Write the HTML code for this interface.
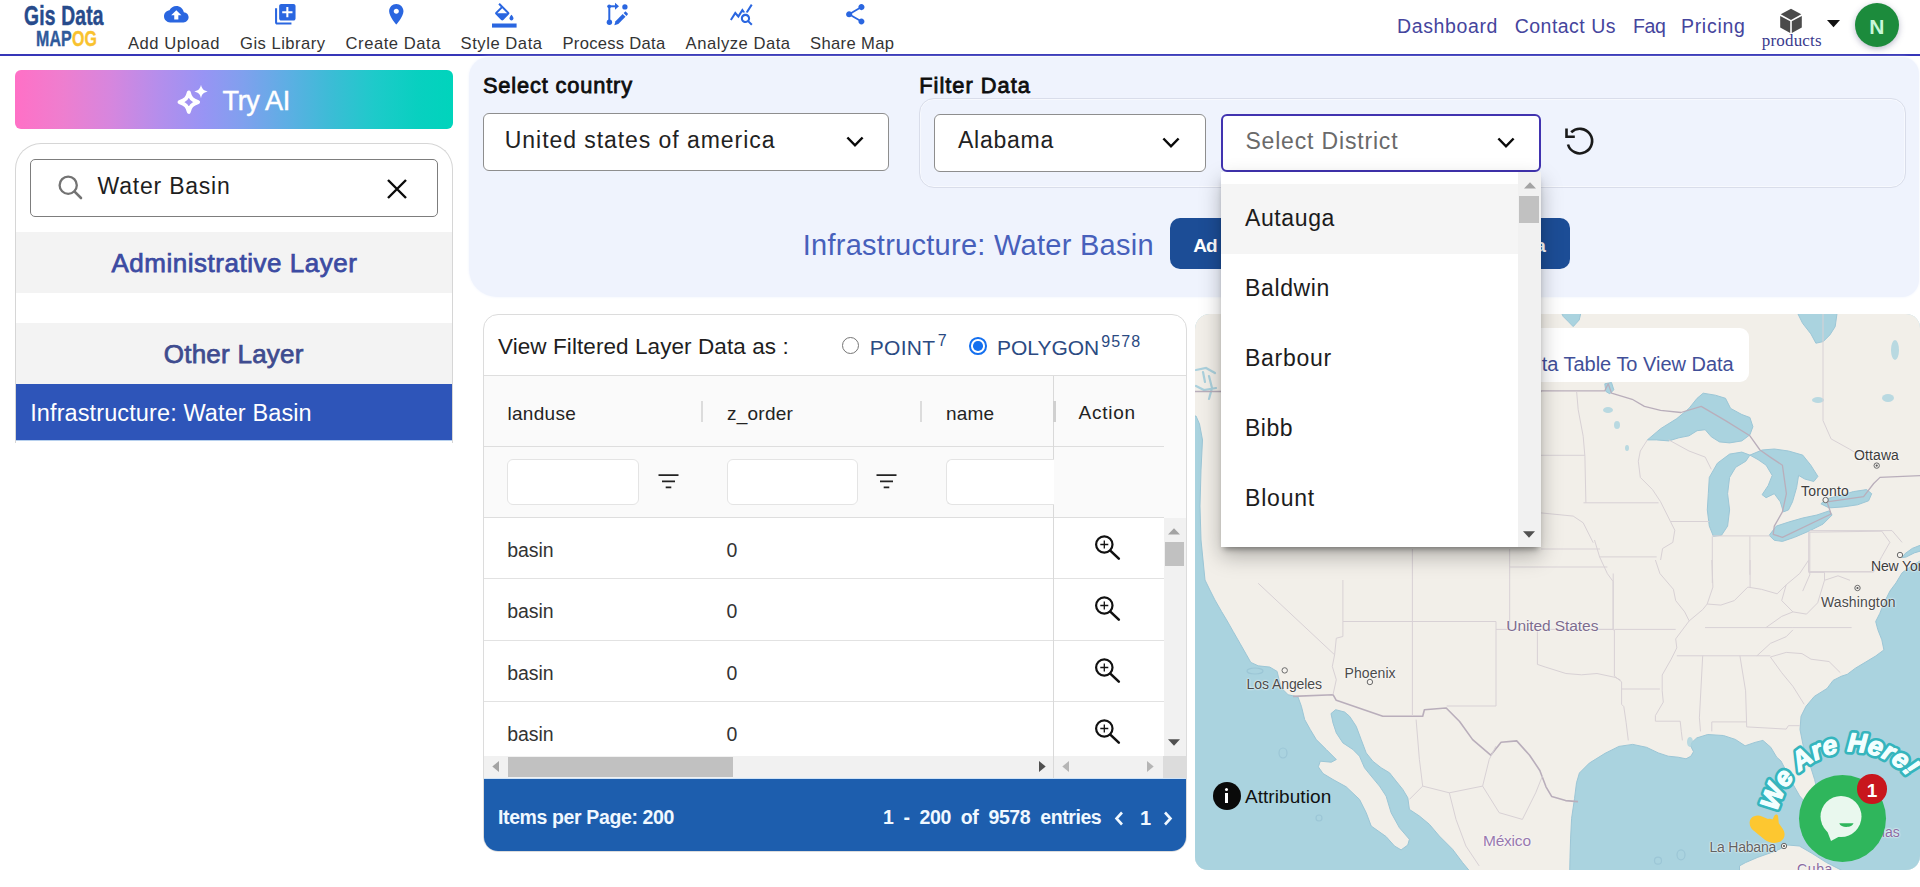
<!DOCTYPE html>
<html>
<head>
<meta charset="utf-8">
<title>GIS Data</title>
<style>
*{box-sizing:border-box;margin:0;padding:0}
html,body{width:1920px;height:887px;overflow:hidden;background:#fff;font-family:"Liberation Sans",sans-serif;color:#222}
.t{position:absolute;white-space:pre;line-height:1}
.a{position:absolute}
svg{position:absolute;overflow:visible}
#hdr{position:absolute;left:0;top:0;width:1920px;height:56px;background:#fff;border-bottom:2px solid #3636b8}
#tryai{position:absolute;left:15px;top:70px;width:438px;height:59px;border-radius:6px;background:linear-gradient(90deg,#ff70c6 0%,#ee7ecf 11%,#d686de 22%,#b48eec 33%,#9894f4 43%,#80a0ee 52%,#5eaee4 62%,#3cbcd6 72%,#1ecaca 82%,#08d0c0 92%,#00d4bc 100%)}
#lcard{position:absolute;left:15px;top:143px;width:438px;height:300px;border:1px solid #d6d6d6;border-bottom:none;border-radius:26px 26px 0 0;background:#fff}
#search{position:absolute;left:30px;top:159px;width:408px;height:58px;border:1px solid #7d7d7d;border-radius:5px;background:#fff}
.lhead{position:absolute;left:16px;width:436px;background:#f3f3f3}
#lsel{position:absolute;left:16px;top:384px;width:436px;height:57px;background:#2e55b9;border-bottom:1px solid #b7d0ee}
#mainbg{position:absolute;left:469px;top:57px;width:1450px;height:239.500px;background:#eff3fd;border-radius:20px 17px 17px 28px;box-shadow:0 0 3px #eff3fd}
.sel{position:absolute;background:#fff;border:1px solid #8e8e8e;border-radius:6px}
#fbox{position:absolute;left:919px;top:97.500px;width:987px;height:90px;border:1px solid #d9ddea;border-radius:15px;box-shadow:inset 0 0 0 1px rgba(255,255,255,.5)}
#addbtn{position:absolute;left:1170px;top:218px;width:400px;height:51px;background:#1c4d96;border-radius:10px}
#dd{position:absolute;left:1221px;top:172px;width:320px;height:375px;background:#fff;box-shadow:0 5px 6px -3px rgba(0,0,0,.38),0 9px 20px 0 rgba(0,0,0,.28)}
#tcard{position:absolute;left:483px;top:314px;width:704px;height:538px;border:1px solid #dcdcdc;border-radius:15px;background:#fff;overflow:hidden}
#map{position:absolute;left:1195px;top:314px;width:725px;height:556px;border-radius:15px 14px 14px 13px;background:#aad3df;overflow:hidden}

</style>
</head>
<body>
<div id="hdr"></div>
<span class="t" style="left:23.500px;top:1.800px;font-size:27.500px;font-weight:700;color:#274b8c;-webkit-text-stroke:.5px #274b8c;transform-origin:0 0;transform:scaleX(.70);letter-spacing:0.3px">Gis Data</span>
<span class="t" style="left:35.800px;top:28.200px;font-size:22px;font-weight:700;color:#2f5a9b;-webkit-text-stroke:.4px #2f5a9b;transform-origin:0 0;transform:scaleX(.725);letter-spacing:0.2px">MAP<span style="color:#f9c22e;-webkit-text-stroke:.4px #f9c22e">OG</span></span>
<svg style="left:163.5px;top:2px" width="24.6" height="24.6" viewBox="0 0 24 24" fill="#2a66e0"><path d="M19.35 10.04C18.67 6.59 15.64 4 12 4 9.11 4 6.6 5.64 5.35 8.04 2.34 8.36 0 10.91 0 14c0 3.31 2.69 6 6 6h13c2.76 0 5-2.24 5-5 0-2.64-2.05-4.78-4.65-4.96zM14 13v4h-4v-4H7l5-5 5 5h-3z"/></svg>
<svg style="left:273px;top:2px" width="24.6" height="24.6" viewBox="0 0 24 24" fill="#2a66e0"><path d="M4 6H2v14c0 1.1.9 2 2 2h14v-2H4V6zm16-4H8c-1.1 0-2 .9-2 2v12c0 1.1.9 2 2 2h12c1.1 0 2-.9 2-2V4c0-1.1-.9-2-2-2zm-1 9h-4v4h-2v-4H9V9h4V5h2v4h4v2z"/></svg>
<svg style="left:383.5px;top:2px" width="24.6" height="24.6" viewBox="0 0 24 24" fill="#2a66e0"><path d="M12 2C8.13 2 5 5.13 5 9c0 5.25 7 13 7 13s7-7.75 7-13c0-3.87-3.13-7-7-7zm0 9.500c-1.38 0-2.5-1.12-2.5-2.5s1.12-2.5 2.5-2.5 2.5 1.12 2.5 2.5-1.12 2.5-2.5 2.500z"/></svg>
<svg style="left:491.6px;top:3px" width="24.6" height="24.6" viewBox="0 0 24 24" fill="#2a66e0"><path d="M16.56 8.94L7.62 0 6.210 1.410l2.380 2.380-5.150 5.150c-.59.59-.59 1.540 0 2.120l5.500 5.500c.29.29.68.44 1.060.44s.77-.15 1.060-.44l5.500-5.500c.59-.58.59-1.530 0-2.120zM5.210 10L10 5.210 14.790 10H5.210zM19 11.500s-2 2.170-2 3.500c0 1.100.9 2 2 2s2-.9 2-2c0-1.330-2-3.500-2-3.500z"/><path d="M0 20h24v4H0z"/></svg>
<svg style="left:604.5px;top:2px" width="24" height="24" viewBox="0 0 24 24" fill="#2a66e0"><circle cx="4.200" cy="4.300" r="1.900"/><circle cx="19.900" cy="4.900" r="2.650"/><circle cx="4.400" cy="20.200" r="2.700"/><path d="M4.300 4.300V19.500" stroke="#2a66e0" stroke-width="2" fill="none"/><path d="M5 4.300H11" stroke="#2a66e0" stroke-width="2" fill="none"/><path d="M10 .8l4 3.500-4 3.500z"/><path d="M9.300 23.200l1.200-4 7.200-7.200 2.800 2.800-7.200 7.200z"/><path d="M18.600 11.100l1.200-1.200c.4-.4 1-.4 1.400 0l1.400 1.400c.4.4.4 1 0 1.400l-1.200 1.200z"/></svg>
<svg style="left:728.5px;top:2px" width="24.6" height="24.6" viewBox="0 0 24 24" fill="#2a66e0"><path d="M19.880 18.470c.44-.7.7-1.510.7-2.390 0-2.490-2.010-4.500-4.500-4.500s-4.500 2.010-4.500 4.500 2.010 4.500 4.490 4.500c.88 0 1.700-.26 2.390-.7L21.580 23 23 21.580l-3.120-3.110zm-3.800.11c-1.380 0-2.500-1.120-2.500-2.500s1.120-2.500 2.500-2.500 2.500 1.120 2.500 2.500-1.120 2.500-2.500 2.500zm-.36-8.500c-.74.02-1.450.18-2.100.45l-.55-.83-3.800 6.180-3.010-3.520-3.630 5.810L1 17l5-8 3 3.500L13 6l2.720 4.080zm2.590.5c-.64-.28-1.330-.45-2.050-.49L21.380 2 23 3.180l-4.690 7.400z"/></svg>
<svg style="left:842.5px;top:2px" width="24.6" height="24.6" viewBox="0 0 24 24" fill="#2a66e0"><path d="M18 16.080c-.76 0-1.440.3-1.960.77L8.910 12.700c.05-.23.09-.46.09-.7s-.04-.47-.09-.7l7.050-4.110c.54.5 1.250.81 2.040.81 1.660 0 3-1.340 3-3s-1.340-3-3-3-3 1.340-3 3c0 .24.04.47.09.7L8.040 9.810C7.500 9.310 6.790 9 6 9c-1.660 0-3 1.340-3 3s1.340 3 3 3c.79 0 1.500-.31 2.040-.81l7.120 4.160c-.05.21-.08.43-.08.65 0 1.610 1.310 2.920 2.920 2.920 1.610 0 2.920-1.310 2.920-2.920s-1.310-2.920-2.920-2.920z"/></svg>
<span class="t" style="left:128.0px;top:35.5px;font-size:16.6px;color:#333;letter-spacing:0.53px;">Add Upload</span>
<span class="t" style="left:240.0px;top:35.5px;font-size:16.6px;color:#333;letter-spacing:0.49px;">Gis Library</span>
<span class="t" style="left:345.6px;top:35.5px;font-size:16.6px;color:#333;letter-spacing:0.54px;">Create Data</span>
<span class="t" style="left:460.6px;top:35.5px;font-size:16.6px;color:#333;letter-spacing:0.54px;">Style Data</span>
<span class="t" style="left:562.5px;top:35.5px;font-size:16.6px;color:#333;letter-spacing:0.28px;">Process Data</span>
<span class="t" style="left:685.6px;top:35.5px;font-size:16.6px;color:#333;letter-spacing:0.52px;">Analyze Data</span>
<span class="t" style="left:810.0px;top:35.5px;font-size:16.6px;color:#333;letter-spacing:0.36px;">Share Map</span>
<span class="t" style="left:1397.0px;top:16.9px;font-size:19.5px;color:#45459d;letter-spacing:0.62px;">Dashboard</span>
<span class="t" style="left:1514.7px;top:16.9px;font-size:19.5px;color:#45459d;letter-spacing:0.48px;">Contact Us</span>
<span class="t" style="left:1633.0px;top:16.9px;font-size:19.5px;color:#45459d;letter-spacing:-0.37px;">Faq</span>
<span class="t" style="left:1680.9px;top:16.9px;font-size:19.5px;color:#45459d;letter-spacing:0.74px;">Pricing</span>
<svg style="left:1779px;top:8px" width="24" height="26" viewBox="0 0 24 26"><path d="M12 .8L22.300 6.300 12 11.900 1.700 6.300z" fill="#4b4b4b"/><path d="M1.200 7.900L11.200 13.300V25L1.200 19.400z" fill="#4b4b4b"/><path d="M22.800 7.900L12.800 13.300V25l10-5.600z" fill="#4b4b4b"/></svg>
<span class="t" style="left:1761.8px;top:32.1px;font-size:17px;color:#3b3b8e;font-family:'Liberation Serif',serif;letter-spacing:0.18px;">products</span>
<svg style="left:1827px;top:20px" width="13" height="8" viewBox="0 0 13 8"><path d="M0 0h13L6.500 7.300z" fill="#111"/></svg>
<div class="a" style="left:1855px;top:3px;width:44px;height:44px;border-radius:50%;background:#1c8b3c;box-shadow:0 2px 6px rgba(60,60,110,.35)"></div>
<span class="t" style="left:1869.3px;top:15.5px;font-size:21px;color:#c8f7d8;font-weight:700;letter-spacing:0.33px;">N</span>
<div id="tryai"></div>
<svg style="left:176px;top:84px" width="34" height="32" viewBox="0 0 34 32"><path d="M12.800 8.500c1.300 5.600 3.300 7.700 9.300 9.700-6 2-8 4.100-9.300 9.700-1.300-5.600-3.300-7.700-9.300-9.700 6-2 8-4.100 9.300-9.700z" fill="none" stroke="#fff" stroke-width="3.900" stroke-linejoin="round"/><path d="M25 .8c.9 4 2.400 5.600 6.700 6.700-4.300 1.100-5.800 2.700-6.700 6.700-.9-4-2.400-5.600-6.700-6.700 4.300-1.100 5.800-2.700 6.700-6.700z" fill="#fff"/></svg>
<span class="t" style="left:222.6px;top:87.6px;font-size:27px;color:#fff;letter-spacing:-0.39px;-webkit-text-stroke:.45px #fff;">Try AI</span>
<div id="lcard"></div><div id="search"></div>
<svg style="left:56px;top:173px" width="28" height="28" viewBox="0 0 28 28"><circle cx="12.200" cy="12.200" r="8.600" fill="none" stroke="#737373" stroke-width="2.300"/><path d="M18.600 18.600L25 25" stroke="#737373" stroke-width="2.600" stroke-linecap="round"/></svg>
<span class="t" style="left:97.6px;top:175.0px;font-size:23px;color:#1e1e1e;letter-spacing:0.78px;">Water Basin</span>
<svg style="left:387px;top:178.500px" width="20" height="20" viewBox="0 0 20 20"><path d="M1 1L19 19M19 1L1 19" stroke="#0a0a0a" stroke-width="2.400" fill="none"/></svg>
<div class="lhead" style="top:232px;height:61px"></div>
<div class="lhead" style="top:323px;height:61px"></div>
<span class="t" style="left:111.5px;top:250.3px;font-size:26px;color:#3c4ba2;letter-spacing:0.52px;-webkit-text-stroke:.75px #3c4ba2;">Administrative Layer</span>
<span class="t" style="left:163.7px;top:340.5px;font-size:26px;color:#3f4c8f;letter-spacing:0.25px;-webkit-text-stroke:.75px #3f4c8f;">Other Layer</span>
<div id="lsel"></div>
<span class="t" style="left:30.2px;top:402.4px;font-size:23.5px;color:#fff;letter-spacing:0.11px;">Infrastructure: Water Basin</span>
<div id="mainbg"></div>
<span class="t" style="left:482.9px;top:74.5px;font-size:21.8px;color:#0e0e0e;letter-spacing:0.85px;-webkit-text-stroke:.8px #0e0e0e;">Select country</span>
<span class="t" style="left:919.3px;top:74.5px;font-size:21.8px;color:#0e0e0e;letter-spacing:1.00px;-webkit-text-stroke:.8px #0e0e0e;">Filter Data</span>
<div class="sel" style="left:483px;top:113px;width:406px;height:58px"></div>
<span class="t" style="left:504.8px;top:128.8px;font-size:23px;color:#222;letter-spacing:0.94px;">United states of america</span>
<svg style="left:845.6px;top:136.3px" width="18" height="12" viewBox="0 0 18 12"><path d="M1.400 1.500L9 9.300 16.600 1.500" fill="none" stroke="#0a0a0a" stroke-width="2.500"/></svg>
<div id="fbox"></div>
<div class="sel" style="left:934px;top:114px;width:272px;height:58px"></div>
<span class="t" style="left:958.0px;top:129.2px;font-size:23px;color:#222;letter-spacing:0.75px;">Alabama</span>
<svg style="left:1162.3px;top:136.8px" width="18" height="12" viewBox="0 0 18 12"><path d="M1.400 1.500L9 9.300 16.600 1.500" fill="none" stroke="#0a0a0a" stroke-width="2.500"/></svg>
<div class="sel" style="left:1221px;top:114px;width:320px;height:58px;border:2px solid #4133b0;background:#fff"></div>
<span class="t" style="left:1245.4px;top:129.8px;font-size:23px;color:#6a6a6a;letter-spacing:0.83px;">Select District</span>
<svg style="left:1497px;top:136.8px" width="18" height="12" viewBox="0 0 18 12"><path d="M1.400 1.500L9 9.300 16.600 1.500" fill="none" stroke="#0a0a0a" stroke-width="2.500"/></svg>
<svg style="left:1563px;top:124px" width="32" height="32" viewBox="0 0 32 32"><path d="M8.200 8.300A12.300 12.300 0 1 1 5 20.500" fill="none" stroke="#1a1a1a" stroke-width="2.600"/><path d="M3.500 4.500v8.300h8.300" fill="none" stroke="#1a1a1a" stroke-width="2.600"/></svg>
<span class="t" style="left:802.7px;top:231.2px;font-size:29px;color:#4760bb;letter-spacing:0.27px;">Infrastructure: Water Basin</span>
<div id="addbtn"></div>
<span class="t" style="left:1193.3px;top:235.5px;font-size:19px;color:#fff;font-weight:700;letter-spacing:-0.91px;">Ad</span>
<span class="t" style="left:1535.3px;top:235.5px;font-size:19px;color:#fff;font-weight:700;letter-spacing:0.00px;">a</span>
<div id="tcard">
</div>
<div class="a" style="left:484px;top:315px;width:702px;height:536px;border-radius:14px;overflow:hidden"><div class="a" style="left:-484px;top:-315px;width:1920px;height:887px">
<div class="a" style="left:484px;top:375px;width:702px;height:143px;background:#fafafa"></div>
<div class="a" style="left:484px;top:375px;width:702px;height:1px;background:#dedede"></div>
<div class="a" style="left:484px;top:446px;width:680px;height:1px;background:#dedede"></div>
<div class="a" style="left:484px;top:517px;width:680px;height:1px;background:#dedede"></div>
<div class="a" style="left:484px;top:518px;width:680px;height:238px;background:#fff"></div>
<div class="a" style="left:484px;top:578px;width:680px;height:1px;background:#e2e2e2"></div>
<div class="a" style="left:484px;top:639.5px;width:680px;height:1px;background:#e2e2e2"></div>
<div class="a" style="left:484px;top:701px;width:680px;height:1px;background:#e2e2e2"></div>
<div class="a" style="left:1053px;top:376px;width:1px;height:403px;background:#d9d9d9"></div>
<div class="a" style="left:700.5px;top:401px;width:2px;height:21px;background:#dcdcdc"></div>
<div class="a" style="left:919.5px;top:401px;width:2px;height:21px;background:#dcdcdc"></div>
<div class="a" style="left:1053px;top:401px;width:3px;height:21px;background:#d0d0d0"></div>
<div class="a" style="left:507px;top:459px;width:131.5px;height:46px;background:#fff;border:1px solid #e4e4e4;border-radius:6px"></div>
<div class="a" style="left:726.5px;top:459px;width:131.5px;height:46px;background:#fff;border:1px solid #e4e4e4;border-radius:6px"></div>
<div class="a" style="left:946px;top:459px;width:108px;height:46px;background:#fff;border:1px solid #e4e4e4;border-radius:6px;border-right:none;border-radius:6px 0 0 6px"></div>
<svg style="left:657.5px;top:473px" width="21" height="16" viewBox="0 0 21 16"><path d="M.5 2.200H20.500M4 8.300H17M7.700 14.300H13.300" stroke="#222" stroke-width="1.800" fill="none"/></svg>
<svg style="left:876px;top:473px" width="21" height="16" viewBox="0 0 21 16"><path d="M.5 2.200H20.500M4 8.300H17M7.700 14.300H13.300" stroke="#222" stroke-width="1.800" fill="none"/></svg>
<div class="a" style="left:1163.500px;top:518px;width:23px;height:238px;background:#f1f1f1"></div>
<div class="a" style="left:1164.500px;top:542px;width:19.500px;height:24px;background:#c1c1c1"></div>
<svg style="left:1168px;top:527.500px" width="12" height="7" viewBox="0 0 12 7"><path d="M0 6.500L6 .3 12 6.500z" fill="#a3a3a3"/></svg>
<svg style="left:1168px;top:738.500px" width="12" height="7" viewBox="0 0 12 7"><path d="M0 .3L6 6.700 12 .3z" fill="#505050"/></svg>
<div class="a" style="left:484px;top:755.500px;width:702px;height:23.500px;background:#f1f1f1"></div>
<div class="a" style="left:1162.500px;top:755.500px;width:24px;height:23.500px;background:#dcdcdc"></div>
<div class="a" style="left:508px;top:756.500px;width:225px;height:20px;background:#c1c1c1"></div>
<div class="a" style="left:1053px;top:755.500px;width:1px;height:23.500px;background:#d9d9d9"></div>
<svg style="left:492px;top:760.5px" width="7" height="11" viewBox="0 0 7 11"><path d="M7 0L.3 5.500 7 11z" fill="#a3a3a3"/></svg>
<svg style="left:1038.5px;top:760.5px" width="7" height="11" viewBox="0 0 7 11"><path d="M0 0L6.700 5.500 0 11z" fill="#505050"/></svg>
<svg style="left:1062px;top:760.5px" width="7" height="11" viewBox="0 0 7 11"><path d="M7 0L.3 5.500 7 11z" fill="#b5b5b5"/></svg>
<svg style="left:1147px;top:760.5px" width="7" height="11" viewBox="0 0 7 11"><path d="M0 0L6.700 5.500 0 11z" fill="#b5b5b5"/></svg>
<div class="a" style="left:484px;top:778.500px;width:702px;height:74px;background:#1d5eae"></div>
<div class="a" style="left:484px;top:777.500px;width:702px;height:1.500px;background:#cfe3f7"></div>
</div></div>
<span class="t" style="left:498.0px;top:335.7px;font-size:22.5px;color:#1e1e1e;letter-spacing:0.08px;">View Filtered Layer Data as :</span>
<div class="a" style="left:842px;top:337px;width:17px;height:17px;border-radius:50%;border:1.500px solid #767676;background:#fff"></div>
<div class="a" style="left:969px;top:337px;width:17.500px;height:17.500px;border-radius:50%;border:2px solid #1570ef;background:#fff"></div>
<div class="a" style="left:973px;top:341px;width:9.500px;height:9.500px;border-radius:50%;background:#1570ef"></div>
<span class="t" style="left:869.8px;top:337.0px;font-size:21px;color:#2b4a82;letter-spacing:0.25px;">POINT</span>
<span class="t" style="left:937.8px;top:333.2px;font-size:16px;color:#2b4a82;letter-spacing:-0.91px;">7</span>
<span class="t" style="left:997.0px;top:337.0px;font-size:21px;color:#2b4a82;letter-spacing:-0.02px;">POLYGON</span>
<span class="t" style="left:1101.3px;top:333.6px;font-size:16px;color:#2b4a82;letter-spacing:1.10px;">9578</span>
<span class="t" style="left:507.5px;top:403.6px;font-size:19px;color:#232323;letter-spacing:0.28px;">landuse</span>
<span class="t" style="left:727.0px;top:403.6px;font-size:19px;color:#232323;letter-spacing:0.23px;">z_order</span>
<span class="t" style="left:946.0px;top:403.6px;font-size:19px;color:#232323;letter-spacing:0.22px;">name</span>
<span class="t" style="left:1078.6px;top:403.1px;font-size:19px;color:#232323;letter-spacing:0.73px;">Action</span>
<span class="t" style="left:507.2px;top:540.8px;font-size:19.5px;color:#333;letter-spacing:-0.07px;">basin</span>
<span class="t" style="left:726.6px;top:540.8px;font-size:19.5px;color:#333;letter-spacing:-1.06px;">0</span>
<svg style="left:1093px;top:532.8px" width="30" height="30" viewBox="0 0 30 30"><circle cx="11.300" cy="11.500" r="8.200" fill="none" stroke="#111" stroke-width="2.200"/><path d="M17.300 17.600L25.800 25.600" stroke="#111" stroke-width="2.600" stroke-linecap="round"/><path d="M7.300 11.500h8M11.300 7.500v8" stroke="#111" stroke-width="1.300"/></svg>
<span class="t" style="left:507.2px;top:602.3px;font-size:19.5px;color:#333;letter-spacing:-0.07px;">basin</span>
<span class="t" style="left:726.6px;top:602.3px;font-size:19.5px;color:#333;letter-spacing:-1.06px;">0</span>
<svg style="left:1093px;top:594.3px" width="30" height="30" viewBox="0 0 30 30"><circle cx="11.300" cy="11.500" r="8.200" fill="none" stroke="#111" stroke-width="2.200"/><path d="M17.300 17.600L25.800 25.600" stroke="#111" stroke-width="2.600" stroke-linecap="round"/><path d="M7.300 11.500h8M11.300 7.500v8" stroke="#111" stroke-width="1.300"/></svg>
<span class="t" style="left:507.2px;top:663.8px;font-size:19.5px;color:#333;letter-spacing:-0.07px;">basin</span>
<span class="t" style="left:726.6px;top:663.8px;font-size:19.5px;color:#333;letter-spacing:-1.06px;">0</span>
<svg style="left:1093px;top:655.8px" width="30" height="30" viewBox="0 0 30 30"><circle cx="11.300" cy="11.500" r="8.200" fill="none" stroke="#111" stroke-width="2.200"/><path d="M17.300 17.600L25.800 25.600" stroke="#111" stroke-width="2.600" stroke-linecap="round"/><path d="M7.300 11.500h8M11.300 7.500v8" stroke="#111" stroke-width="1.300"/></svg>
<span class="t" style="left:507.2px;top:725.3px;font-size:19.5px;color:#333;letter-spacing:-0.07px;">basin</span>
<span class="t" style="left:726.6px;top:725.3px;font-size:19.5px;color:#333;letter-spacing:-1.06px;">0</span>
<svg style="left:1093px;top:717.3px" width="30" height="30" viewBox="0 0 30 30"><circle cx="11.300" cy="11.500" r="8.200" fill="none" stroke="#111" stroke-width="2.200"/><path d="M17.300 17.600L25.800 25.600" stroke="#111" stroke-width="2.600" stroke-linecap="round"/><path d="M7.300 11.500h8M11.300 7.500v8" stroke="#111" stroke-width="1.300"/></svg>
<span class="t" style="left:498.0px;top:808.2px;font-size:19.5px;color:#f0f8ff;font-weight:700;letter-spacing:-0.38px;">Items per Page: 200</span>
<span class="t" style="left:883.0px;top:808.2px;font-size:19.5px;color:#f0f8ff;font-weight:700;letter-spacing:-0.41px;">1  -  200  of  9578  entries</span>
<svg style="left:1114px;top:811px" width="10" height="15" viewBox="0 0 10 15"><path d="M8 1.500L2.500 7.500 8 13.500" fill="none" stroke="#f0f8ff" stroke-width="2.600"/></svg>
<span class="t" style="left:1140.0px;top:807.8px;font-size:20px;color:#f0f8ff;font-weight:700;letter-spacing:-1.12px;">1</span>
<svg style="left:1163px;top:811px" width="10" height="15" viewBox="0 0 10 15"><path d="M2 1.500L7.500 7.500 2 13.500" fill="none" stroke="#f0f8ff" stroke-width="2.600"/></svg>
<div id="map"><svg style="left:0;top:0" width="725" height="556" viewBox="1195 314 725 556">
<rect x="1195" y="314" width="725" height="556" fill="#f2efe9"/>
<path d="M1190.0,416.0 L1196.0,416.0 L1199.5,424.0 L1202.5,440.0 L1201.0,470.0 L1200.0,506.0 L1201.0,540.0 L1203.5,565.0 L1205.0,580.0 L1209.9,590.0 L1214.9,599.9 L1221.6,611.6 L1226.6,619.9 L1233.2,631.5 L1239.9,643.2 L1246.5,654.8 L1250.8,662.4 L1258.2,665.8 L1269.8,667.1 L1277.1,671.4 L1279.1,679.7 L1281.4,688.0 L1288.1,694.7 L1298.0,697.0 L1301.4,706.3 L1304.7,719.6 L1310.3,729.6 L1316.3,739.6 L1326.3,749.5 L1336.3,759.5 L1331.3,762.2 L1320.3,761.2 L1318.3,766.8 L1323.0,773.5 L1333.0,779.5 L1346.2,786.8 L1359.5,799.4 L1366.2,812.7 L1371.2,826.0 L1386.1,836.6 L1394.5,846.0 L1401.1,849.9 L1407.8,845.0 L1409.4,839.3 L1399.4,827.7 L1391.1,812.7 L1386.1,796.1 L1379.5,786.1 L1371.2,776.1 L1364.5,767.8 L1359.5,756.2 L1352.9,749.5 L1342.9,742.9 L1336.3,732.9 L1333.0,723.0 L1331.0,713.6 L1335.6,709.7 L1344.6,712.0 L1349.6,716.3 L1356.2,726.3 L1361.2,739.6 L1366.2,752.9 L1372.8,761.2 L1381.2,767.8 L1389.5,772.8 L1396.1,781.1 L1402.8,789.4 L1407.8,797.8 L1409.4,809.4 L1419.4,816.0 L1429.4,824.3 L1439.3,836.0 L1452.6,849.3 L1462.6,862.6 L1470.9,872.6 L1471.0,880.0 L1185.0,880.0Z" fill="#aad3df" stroke="#9cc6d6" stroke-width="1" stroke-linejoin="round"/>
<path d="M1569.6,877.5 L1570.0,857.8 L1570.6,838.1 L1571.6,818.3 L1574.5,798.6 L1576.5,782.8 L1579.4,773.0 L1589.3,763.1 L1605.1,753.3 L1618.9,746.4 L1632.7,744.4 L1646.5,747.3 L1658.3,752.9 L1668.2,756.2 L1678.1,757.2 L1686.0,758.8 L1690.9,756.2 L1693.5,751.7 L1690.9,746.4 L1691.9,742.4 L1696.8,737.9 L1707.7,734.5 L1723.4,735.5 L1735.3,739.4 L1745.1,745.8 L1755.0,742.4 L1762.9,740.4 L1770.8,747.3 L1776.7,757.2 L1781.0,761.0 L1785.0,768.7 L1792.3,783.0 L1799.6,795.8 L1808.6,806.6 L1815.0,810.0 L1818.6,807.7 L1818.6,796.1 L1814.6,779.5 L1809.3,762.8 L1803.3,746.2 L1800.0,729.6 L1801.0,716.3 L1806.0,706.3 L1814.3,696.4 L1827.0,688.5 L1833.1,680.4 L1841.2,676.3 L1847.3,674.3 L1855.4,668.2 L1865.6,662.1 L1875.7,656.0 L1883.9,649.9 L1881.8,639.8 L1877.8,629.6 L1875.7,621.5 L1879.8,613.4 L1883.9,603.2 L1889.9,591.1 L1896.0,582.9 L1902.1,572.8 L1910.3,566.7 L1922.4,559.6 L1930.0,560.0 L1930.0,880.0 L1571.0,880.0Z" fill="#aad3df" stroke="#9cc6d6" stroke-width="1" stroke-linejoin="round"/>
<path d="M1922.4,544.4 L1912.3,548.4 L1905.2,553.5 L1902.1,557.6 L1906.2,557.0 L1914.3,552.9 L1922.4,550.5Z" fill="#aad3df" stroke="#9cc6d6" stroke-width="1" stroke-linejoin="round"/>
<path d="M1647.4,439.9 L1660.6,428.7 L1676.8,418.6 L1689.0,408.4 L1697.1,398.3 L1703.2,393.2 L1715.4,395.2 L1725.5,398.3 L1730.6,408.4 L1741.8,414.5 L1749.9,417.5 L1752.9,426.7 L1749.9,434.8 L1741.8,440.9 L1729.6,442.9 L1719.5,441.9 L1711.3,436.8 L1705.2,429.7 L1697.1,430.7 L1689.0,435.8 L1678.9,437.8 L1668.7,440.9 L1656.5,439.9Z" fill="#aad3df" stroke="#9cc6d6" stroke-width="1" stroke-linejoin="round"/>
<path d="M1709.3,477.4 L1717.4,463.2 L1729.6,454.1 L1741.8,452.1 L1749.9,455.1 L1745.8,461.2 L1735.7,467.3 L1729.6,477.4 L1727.6,493.7 L1729.6,509.9 L1727.6,526.1 L1721.5,535.3 L1713.4,536.3 L1709.3,526.1 L1707.3,509.9 L1708.3,493.7Z" fill="#aad3df" stroke="#9cc6d6" stroke-width="1" stroke-linejoin="round"/>
<path d="M1749.9,455.1 L1762.1,450.0 L1774.3,449.0 L1788.5,451.0 L1802.7,455.1 L1810.8,465.2 L1817.9,476.4 L1813.8,481.5 L1804.7,479.0 L1798.6,475.4 L1796.6,487.6 L1792.5,501.8 L1788.5,509.9 L1783.4,511.9 L1780.3,501.8 L1774.3,493.7 L1766.1,497.7 L1762.1,494.7 L1768.2,485.5 L1772.2,475.4 L1766.1,465.2 L1758.0,459.6Z" fill="#aad3df" stroke="#9cc6d6" stroke-width="1" stroke-linejoin="round"/>
<path d="M1769.2,535.3 L1776.3,526.1 L1788.5,522.1 L1802.7,518.0 L1816.9,515.0 L1829.1,510.9 L1832.1,515.0 L1823.0,524.1 L1808.8,531.2 L1794.5,537.3 L1782.4,541.4 L1774.3,540.3Z" fill="#aad3df" stroke="#9cc6d6" stroke-width="1" stroke-linejoin="round"/>
<path d="M1820.9,503.8 L1827.0,498.7 L1839.2,495.7 L1853.4,491.6 L1866.6,489.6 L1871.7,493.7 L1868.6,500.8 L1857.5,504.8 L1843.3,506.9 L1829.1,507.9Z" fill="#aad3df" stroke="#9cc6d6" stroke-width="1" stroke-linejoin="round"/>
<path d="M1796.0,310.0 L1837.5,310.0 L1835.2,326.6 L1829.9,334.9 L1823.2,341.6 L1815.9,343.2 L1810.9,333.9 L1802.6,323.3Z" fill="#aad3df" stroke="#9cc6d6" stroke-width="1" stroke-linejoin="round"/>
<path d="M1559.9,310.0 L1581.6,310.0 L1579.2,320.0 L1573.2,326.6 L1568.3,321.6 L1563.3,316.6Z" fill="#aad3df" stroke="#9cc6d6" stroke-width="1" stroke-linejoin="round"/>
<path d="M1604.8,383.8 L1611.5,382.5 L1613.8,389.8 L1609.8,393.8 L1605.8,391.4Z" fill="#aad3df" stroke="#9cc6d6" stroke-width="1" stroke-linejoin="round"/>
<path d="M1739.5,865.9 L1745.5,862.6 L1757.8,857.3 L1776.0,850.9 L1787.7,845.0 L1799.3,846.0 L1811.9,853.3 L1826.6,862.6 L1840.9,869.9 L1855.8,879.2 L1739.5,879.2Z" fill="#f2efe9" stroke="#9cc6d6" stroke-width="1"/>
<ellipse cx="1283" cy="753" rx="4" ry="5" fill="#aad3df" stroke="#9cc6d6" stroke-width="1.2"/>
<ellipse cx="1319" cy="818" rx="3" ry="3" fill="#aad3df" stroke="#9cc6d6" stroke-width="1.2"/>
<ellipse cx="1658" cy="860.7" rx="3.5" ry="3.5" fill="#aad3df" stroke="#9cc6d6" stroke-width="1.2"/>
<ellipse cx="1681" cy="854.8" rx="4" ry="5" fill="#aad3df" stroke="#9cc6d6" stroke-width="1.2"/>
<ellipse cx="1255" cy="671" rx="8" ry="3" fill="#aad3df" stroke="#9cc6d6" stroke-width="1.2"/>
<ellipse cx="1608" cy="410" rx="5" ry="3" fill="#aad3df" opacity=".8"/>
<ellipse cx="1617" cy="425" rx="3" ry="4" fill="#aad3df" opacity=".8"/>
<ellipse cx="1627" cy="448" rx="2" ry="3" fill="#aad3df" opacity=".8"/>
<ellipse cx="1818" cy="400" rx="6" ry="3" fill="#aad3df" opacity=".8"/>
<ellipse cx="1888" cy="398" rx="6" ry="4" fill="#aad3df" opacity=".8"/>
<ellipse cx="1895" cy="350" rx="4" ry="10" fill="#aad3df" opacity=".8"/>
<ellipse cx="1690" cy="742" rx="3" ry="5" fill="#aad3df" opacity=".8"/>
<ellipse cx="1702" cy="880" rx="2" ry="2" fill="#aad3df" opacity=".8"/>
<path d="M1196,370 L1206,368 L1215,373 M1209,376 L1212,388 L1209,399 M1203,372 L1205,382 M1196,386 L1204,390 L1216,388" fill="none" stroke="#9fcbdb" stroke-width="2.2" stroke-linecap="round" opacity=".85"/>
<path d="M1293.1,696.4 L1333.0,694.7 L1336.3,700.3 L1382.8,716.3 L1422.7,716.3 L1424.4,709.7 L1446.0,708.0 L1446.7,708.5 L1459.6,721.5 L1472.6,739.6 L1490.7,755.2 L1501.1,742.2 L1516.7,740.9 L1529.6,755.2 L1540.0,770.7 L1540.0,771.0 L1546.0,786.8 L1551.8,796.6 L1565.6,800.6 L1578.0,801.6" fill="none" stroke="#b9aebb" stroke-width="1.6" stroke-linejoin="round"/>
<path d="M1195.0,391.5 L1541.0,391.5 L1540.0,390.8 L1604.8,390.8 L1608.2,383.8 L1611.5,393.1 L1632.2,399.3 L1644.4,406.4 L1660.6,410.4 L1680.9,412.5 L1701.2,406.4 L1725.5,420.6 L1749.9,435.8 L1760.0,450.0 L1770.2,457.1 L1782.4,465.2 L1786.4,493.7 L1782.4,511.9 L1774.3,526.1 L1773.2,534.3 L1782.4,537.3 L1831.1,514.0 L1827.0,501.8 L1863.6,496.7 L1873.7,483.5 L1880.0,477.4 L1924.4,475.4" fill="none" stroke="#b9aebb" stroke-width="1.3" stroke-linejoin="round"/>
<path d="M1258.2,583.3 L1334.6,654.8 L1332.3,666.4 L1336.3,679.7 L1333.0,694.7" fill="none" stroke="#d8d1d5" stroke-width="1.0" stroke-linejoin="round"/>
<path d="M1342.9,580.0 L1342.9,636.5 L1336.3,638.2 L1334.6,654.8" fill="none" stroke="#d8d1d5" stroke-width="1.0" stroke-linejoin="round"/>
<path d="M1343.0,621.5 L1496.0,621.5" fill="none" stroke="#d8d1d5" stroke-width="1.0" stroke-linejoin="round"/>
<path d="M1412.4,549.0 L1412.4,716.0" fill="none" stroke="#d8d1d5" stroke-width="1.0" stroke-linejoin="round"/>
<path d="M1496.0,621.5 L1496.0,706.0 L1446.7,706.0" fill="none" stroke="#d8d1d5" stroke-width="1.0" stroke-linejoin="round"/>
<path d="M1509.7,549.0 L1509.7,629.4" fill="none" stroke="#d8d1d5" stroke-width="1.0" stroke-linejoin="round"/>
<path d="M1496.0,629.4 L1537.4,629.4 L1537.4,664.4 L1545.2,667.0 L1565.9,673.5 L1581.5,674.8 L1597.0,673.5 L1615.2,677.4 L1620.4,680.0" fill="none" stroke="#d8d1d5" stroke-width="1.0" stroke-linejoin="round"/>
<path d="M1537.4,629.4 L1613.0,629.4" fill="none" stroke="#d8d1d5" stroke-width="1.0" stroke-linejoin="round"/>
<path d="M1509.7,567.0 L1607.4,567.0" fill="none" stroke="#d8d1d5" stroke-width="1.0" stroke-linejoin="round"/>
<path d="M1594.5,540.0 L1599.6,556.9 L1607.4,573.7 L1613.1,581.5 L1613.1,629.4" fill="none" stroke="#d8d1d5" stroke-width="1.0" stroke-linejoin="round"/>
<path d="M1599.6,556.9 L1656.7,556.9" fill="none" stroke="#d8d1d5" stroke-width="1.0" stroke-linejoin="round"/>
<path d="M1541.0,549.0 L1600.0,549.0" fill="none" stroke="#d8d1d5" stroke-width="1.0" stroke-linejoin="round"/>
<path d="M1576.6,391.4 L1578.2,409.7 L1583.2,436.3 L1584.9,456.3 L1585.9,502.8" fill="none" stroke="#d8d1d5" stroke-width="1.0" stroke-linejoin="round"/>
<path d="M1540.0,455.3 L1584.9,455.3" fill="none" stroke="#d8d1d5" stroke-width="1.0" stroke-linejoin="round"/>
<path d="M1540.0,512.8 L1573.2,516.1 L1583.2,522.8 L1593.2,542.7" fill="none" stroke="#d8d1d5" stroke-width="1.0" stroke-linejoin="round"/>
<path d="M1647.4,439.9 L1640.3,451.0 L1638.3,461.2 L1640.3,477.4 L1652.5,489.6 L1660.6,501.8 L1668.7,518.0 L1674.8,530.2 L1672.8,542.4 L1662.6,548.5 L1660.6,560.0" fill="none" stroke="#d8d1d5" stroke-width="1.0" stroke-linejoin="round"/>
<path d="M1668.7,439.9 L1689.0,451.0 L1705.2,457.1 L1711.3,469.3" fill="none" stroke="#d8d1d5" stroke-width="1.0" stroke-linejoin="round"/>
<path d="M1670.7,521.5 L1709.3,521.5" fill="none" stroke="#d8d1d5" stroke-width="1.0" stroke-linejoin="round"/>
<path d="M1583.5,502.8 L1658.6,502.8" fill="none" stroke="#d8d1d5" stroke-width="1.0" stroke-linejoin="round"/>
<path d="M1712.3,536.3 L1712.3,583.0" fill="none" stroke="#d8d1d5" stroke-width="1.0" stroke-linejoin="round"/>
<path d="M1749.9,536.3 L1749.9,574.8" fill="none" stroke="#d8d1d5" stroke-width="1.0" stroke-linejoin="round"/>
<path d="M1712.3,535.9 L1770.2,535.9" fill="none" stroke="#d8d1d5" stroke-width="1.0" stroke-linejoin="round"/>
<path d="M1809.8,532.2 L1809.8,574.8 L1802.7,591.1" fill="none" stroke="#d8d1d5" stroke-width="1.0" stroke-linejoin="round"/>
<path d="M1809.8,530.6 L1880.0,530.6 L1892.0,530.6 L1902.1,542.4" fill="none" stroke="#d8d1d5" stroke-width="1.0" stroke-linejoin="round"/>
<path d="M1809.8,571.8 L1873.7,571.8" fill="none" stroke="#d8d1d5" stroke-width="1.0" stroke-linejoin="round"/>
<path d="M1823.0,313.0 L1823.0,420.6 L1831.1,438.9 L1849.3,449.0 L1869.6,461.2" fill="none" stroke="#d8d1d5" stroke-width="1.0" stroke-linejoin="round"/>
<path d="M1613.2,573.5 L1613.2,629.9 L1614.4,629.9 L1614.4,676.1 L1621.6,681.8 L1621.6,704.3 L1623.8,706.6 L1626.1,722.3 L1628.3,740.4" fill="none" stroke="#d8d1d5" stroke-width="1.0" stroke-linejoin="round"/>
<path d="M1590.0,629.4 L1613.2,629.4" fill="none" stroke="#d8d1d5" stroke-width="1.0" stroke-linejoin="round"/>
<path d="M1614.4,629.4 L1675.7,629.4" fill="none" stroke="#d8d1d5" stroke-width="1.0" stroke-linejoin="round"/>
<path d="M1705.0,627.6 L1792.9,627.6 L1851.6,627.6" fill="none" stroke="#d8d1d5" stroke-width="1.0" stroke-linejoin="round"/>
<path d="M1621.6,689.0 L1659.9,689.0" fill="none" stroke="#d8d1d5" stroke-width="1.0" stroke-linejoin="round"/>
<path d="M1655.4,560.0 L1659.9,573.5 L1673.4,589.3 L1675.7,600.6 L1684.7,611.9 L1689.2,620.9 L1682.4,629.9 L1675.7,638.9 L1676.8,647.9 L1671.2,659.2 L1662.2,675.0 L1662.2,690.8 L1663.3,702.1 L1655.4,715.6 L1655.4,721.2 L1680.2,721.2 L1681.3,731.4 L1682.4,740.4" fill="none" stroke="#d8d1d5" stroke-width="1.0" stroke-linejoin="round"/>
<path d="M1689.2,620.9 L1702.7,609.6 L1707.2,604.0 L1720.8,605.1 L1734.3,600.6 L1747.8,587.1 L1761.4,589.3 L1777.1,593.8 L1786.2,584.8 L1799.7,573.5 L1808.7,560.0" fill="none" stroke="#d8d1d5" stroke-width="1.0" stroke-linejoin="round"/>
<path d="M1711.8,560.0 L1712.9,587.1 L1707.2,604.0" fill="none" stroke="#d8d1d5" stroke-width="1.0" stroke-linejoin="round"/>
<path d="M1750.1,560.0 L1750.1,587.1" fill="none" stroke="#d8d1d5" stroke-width="1.0" stroke-linejoin="round"/>
<path d="M1765.9,627.6 L1781.7,616.4 L1792.9,611.9 L1781.7,600.6 L1786.2,584.8" fill="none" stroke="#d8d1d5" stroke-width="1.0" stroke-linejoin="round"/>
<path d="M1676.8,655.8 L1770.4,655.8" fill="none" stroke="#d8d1d5" stroke-width="1.0" stroke-linejoin="round"/>
<path d="M1756.9,655.8 L1770.4,643.4 L1786.2,636.7 L1792.9,629.9" fill="none" stroke="#d8d1d5" stroke-width="1.0" stroke-linejoin="round"/>
<path d="M1702.7,655.8 L1699.4,717.8 L1700.5,731.4" fill="none" stroke="#d8d1d5" stroke-width="1.0" stroke-linejoin="round"/>
<path d="M1739.9,655.8 L1745.6,690.8 L1746.7,726.9 L1786.2,729.1 L1788.4,725.7 L1799.7,725.7" fill="none" stroke="#d8d1d5" stroke-width="1.0" stroke-linejoin="round"/>
<path d="M1711.8,731.4 L1711.8,721.9 L1746.7,721.9" fill="none" stroke="#d8d1d5" stroke-width="1.0" stroke-linejoin="round"/>
<path d="M1770.4,657.0 L1781.7,672.7 L1792.9,686.3 L1804.2,704.3" fill="none" stroke="#d8d1d5" stroke-width="1.0" stroke-linejoin="round"/>
<path d="M1770.4,657.0 L1786.2,652.4 L1802.0,653.6 L1811.0,659.2 L1829.0,661.5 L1840.3,672.7" fill="none" stroke="#d8d1d5" stroke-width="1.0" stroke-linejoin="round"/>
<path d="M1792.9,611.9 L1806.5,614.1 L1817.7,602.8 L1824.5,580.3 L1838.0,575.8 L1850.0,580.3" fill="none" stroke="#d8d1d5" stroke-width="1.0" stroke-linejoin="round"/>
<path d="M1808.7,560.0 L1808.7,572.4 L1824.5,572.4 L1824.5,580.3" fill="none" stroke="#d8d1d5" stroke-width="1.0" stroke-linejoin="round"/>
<path d="M1808.7,532.2 L1881.8,531.2 L1889.9,542.3 L1881.8,556.5 L1873.7,571.8 L1808.7,571.8 L1808.7,532.2" fill="none" stroke="#d8d1d5" stroke-width="1.0" stroke-linejoin="round"/>
<path d="M1416.1,719.6 L1419.4,759.5 L1422.7,786.1 L1409.4,799.4" fill="none" stroke="#d8d1d5" stroke-width="1" stroke-linejoin="round"/>
<path d="M1422.7,786.1 L1449.3,792.8 L1482.6,786.1 L1489.2,759.5 L1495.9,746.2" fill="none" stroke="#d8d1d5" stroke-width="1" stroke-linejoin="round"/>
<path d="M1449.3,792.8 L1456.0,819.4 L1465.9,846.0 L1479.2,865.9" fill="none" stroke="#d8d1d5" stroke-width="1" stroke-linejoin="round"/>
<path d="M1482.6,786.1 L1499.2,812.7 L1522.4,819.4 L1535.7,792.8 L1542.4,776.1" fill="none" stroke="#d8d1d5" stroke-width="1" stroke-linejoin="round"/>
<circle cx="1857.5" cy="588" r="2.700" fill="#f5f2ee" stroke="#6a6a6a" stroke-width="1"/><circle cx="1857.5" cy="588" r="1.100" fill="#555"/>
<circle cx="1876.7" cy="465.6" r="2.700" fill="#f5f2ee" stroke="#6a6a6a" stroke-width="1"/><circle cx="1876.7" cy="465.6" r="1.100" fill="#555"/>
<circle cx="1825.6" cy="500" r="2.700" fill="#f5f2ee" stroke="#6a6a6a" stroke-width="1"/>
<circle cx="1900" cy="555" r="2.700" fill="#f5f2ee" stroke="#6a6a6a" stroke-width="1"/>
<circle cx="1284.7" cy="670.4" r="2.700" fill="#f5f2ee" stroke="#6a6a6a" stroke-width="1"/>
<circle cx="1369.9" cy="682" r="2.700" fill="#f5f2ee" stroke="#6a6a6a" stroke-width="1"/>
<circle cx="1784" cy="846" r="2.700" fill="#f5f2ee" stroke="#6a6a6a" stroke-width="1"/><circle cx="1784" cy="846" r="1.100" fill="#555"/>
</svg></div>
<div class="a" style="left:1195px;top:314px;width:725px;height:556px;border-radius:15px 14px 14px 13px;overflow:hidden"><div class="a" style="left:-1195px;top:-314px;width:1920px;height:887px">
<span class="t" style="left:1506.3px;top:618.2px;font-size:15.5px;color:#7d6c8e;letter-spacing:-0.08px;text-shadow:0 0 2px rgba(255,255,255,.9),0 0 2px rgba(255,255,255,.9);">United States</span>
<span class="t" style="left:1483.0px;top:833.2px;font-size:15.5px;color:#9878ae;letter-spacing:-0.22px;text-shadow:0 0 2px rgba(255,255,255,.9),0 0 2px rgba(255,255,255,.9);">México</span>
<span class="t" style="left:1246.5px;top:676.9px;font-size:14px;color:#4a4a4a;letter-spacing:-0.07px;text-shadow:0 0 2px rgba(255,255,255,.9),0 0 2px rgba(255,255,255,.9);">Los Angeles</span>
<span class="t" style="left:1344.6px;top:666.3px;font-size:14px;color:#4a4a4a;letter-spacing:0.06px;text-shadow:0 0 2px rgba(255,255,255,.9),0 0 2px rgba(255,255,255,.9);">Phoenix</span>
<span class="t" style="left:1821.0px;top:595.4px;font-size:14px;color:#4a4a4a;letter-spacing:0.13px;text-shadow:0 0 2px rgba(255,255,255,.9),0 0 2px rgba(255,255,255,.9);">Washington</span>
<span class="t" style="left:1854.0px;top:447.5px;font-size:14px;color:#3c3c3c;letter-spacing:0.11px;text-shadow:0 0 2px rgba(255,255,255,.9),0 0 2px rgba(255,255,255,.9);">Ottawa</span>
<span class="t" style="left:1801.0px;top:484.4px;font-size:14px;color:#3c3c3c;letter-spacing:0.19px;text-shadow:0 0 2px rgba(255,255,255,.9),0 0 2px rgba(255,255,255,.9);">Toronto</span>
<span class="t" style="left:1871.0px;top:558.9px;font-size:14px;color:#3c3c3c;letter-spacing:-0.14px;text-shadow:0 0 2px rgba(255,255,255,.9),0 0 2px rgba(255,255,255,.9);">New York</span>
<span class="t" style="left:1709.5px;top:839.9px;font-size:14px;color:#626262;letter-spacing:-0.22px;text-shadow:0 0 2px rgba(255,255,255,.9),0 0 2px rgba(255,255,255,.9);">La Habana</span>
<span class="t" style="left:1797.0px;top:861.9px;font-size:14px;color:#8a6aa0;letter-spacing:0.63px;text-shadow:0 0 2px rgba(255,255,255,.9),0 0 2px rgba(255,255,255,.9);">Cuba</span>
<span class="t" style="left:1840.0px;top:824.9px;font-size:14px;color:#8a6aa0;letter-spacing:0.12px;text-shadow:0 0 2px rgba(255,255,255,.9),0 0 2px rgba(255,255,255,.9);">Bahamas</span>
<div class="a" style="left:1300px;top:328px;width:449px;height:53.500px;background:#fff;border-radius:9px"></div>
<span class="t" style="left:1541.7px;top:354.3px;font-size:20px;color:#414f98;letter-spacing:-0.02px;">ta Table To View Data</span>
<div class="a" style="left:1212.500px;top:781.500px;width:28px;height:28px;border-radius:50%;background:#0a0a0a"></div>
<div class="a" style="left:1225px;top:787.500px;width:3.400px;height:3.400px;border-radius:50%;background:#fff"></div><div class="a" style="left:1225px;top:792.500px;width:3.400px;height:10.500px;background:#fff"></div>
<span class="t" style="left:1244.9px;top:786.6px;font-size:19px;color:#111;letter-spacing:0.08px;">Attribution</span>
<svg style="left:1748px;top:812px" width="40" height="34" viewBox="0 0 40 34"><path d="M3 6.500c3-3.500 8-3.500 11-2l6 2.500c1.500-.5 3-.3 4.500.5l2-4c1-1.800 3.300-1.300 3.600.7l.7 7 3.700 5.300c3.500 5 2.500 10.500-2 13-5 2.500-11.500 1.500-16-2L5.500 18.500C1.500 15.500.5 10 3 6.500z" fill="#fdc730"/></svg>
<div class="a" style="left:1798.500px;top:774.500px;width:87.500px;height:87.500px;border-radius:50%;background:#2fb65c"></div>
<svg style="left:1818px;top:794px" width="48" height="50" viewBox="0 0 48 50"><circle cx="23" cy="22.500" r="20.500" fill="#e9f8ee"/><path d="M8 34L13 47 24 41z" fill="#e9f8ee"/><path d="M21.300 29.300h14.200c-1.200 4.600-12.600 5.200-14.200 0z" fill="#2fb65c"/></svg>
<div class="a" style="left:1857px;top:774px;width:29.500px;height:29.500px;border-radius:50%;background:#c8161d"></div>
<span class="t" style="left:1866.8px;top:780.6px;font-size:19px;color:#fff;font-weight:700;letter-spacing:-1.08px;">1</span>
<svg style="left:1195px;top:314px" width="725" height="556" viewBox="1195 314 725 556"><defs><path id="arc" d="M1777.5,812 A75.500,75.500 0 0 1 1912,782"/></defs><text font-family="Liberation Sans" font-weight="700" font-style="italic" font-size="26.500" letter-spacing="0.2" fill="#fff" stroke="#35b5bd" stroke-width="6.500" paint-order="stroke" stroke-linejoin="round"><textPath href="#arc">We Are Here!</textPath></text><text font-family="Liberation Sans" font-weight="700" font-style="italic" font-size="26.500" letter-spacing="0.2" fill="#f2ffff" stroke="#f2ffff" stroke-width="1.100" stroke-linejoin="round"><textPath href="#arc">We Are Here!</textPath></text></svg>
</div></div>
<div id="dd"></div>
<div class="a" style="left:1221px;top:183.800px;width:296.500px;height:70px;background:#f5f5f5"></div>
<div class="a" style="left:1517.500px;top:172px;width:23.500px;height:375px;background:#f1f1f1"></div>
<div class="a" style="left:1519px;top:196px;width:20px;height:26.500px;background:#c1c1c1"></div>
<svg style="left:1523.500px;top:182px" width="12" height="7" viewBox="0 0 12 7"><path d="M0 6.500L6 .3 12 6.500z" fill="#a3a3a3"/></svg>
<svg style="left:1523px;top:530.500px" width="12" height="7" viewBox="0 0 12 7"><path d="M0 .3L6 6.700 12 .3z" fill="#505050"/></svg>
<span class="t" style="left:1245.0px;top:207.4px;font-size:23px;color:#1c1c1c;letter-spacing:0.61px;">Autauga</span>
<span class="t" style="left:1245.0px;top:277.4px;font-size:23px;color:#1c1c1c;letter-spacing:0.64px;">Baldwin</span>
<span class="t" style="left:1245.0px;top:347.4px;font-size:23px;color:#1c1c1c;letter-spacing:0.74px;">Barbour</span>
<span class="t" style="left:1245.0px;top:417.4px;font-size:23px;color:#1c1c1c;letter-spacing:0.49px;">Bibb</span>
<span class="t" style="left:1245.0px;top:487.4px;font-size:23px;color:#1c1c1c;letter-spacing:0.80px;">Blount</span>
</body>
</html>
